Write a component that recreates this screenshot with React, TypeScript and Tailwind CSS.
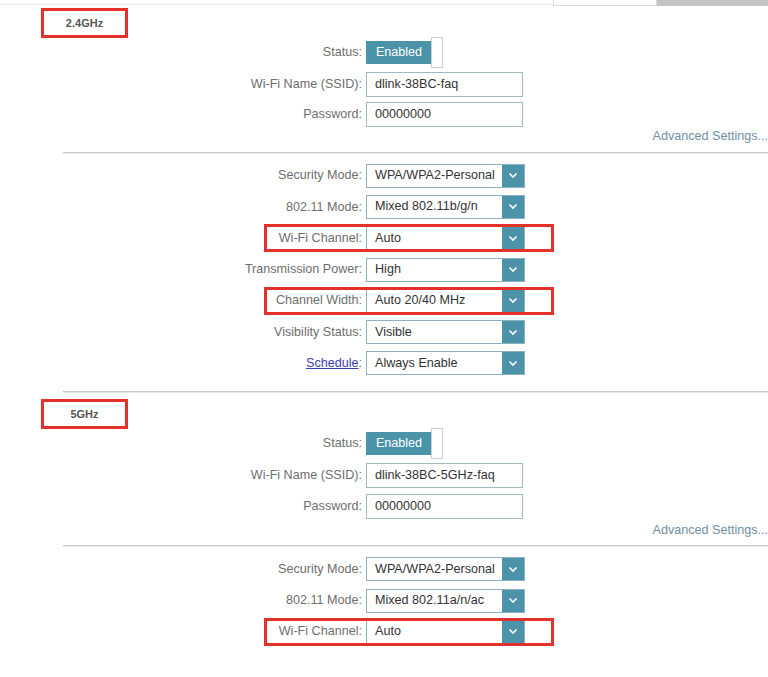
import React from 'react';

const teal = 'bg-[#4a93a8]';

const Chevron = () => (
  <svg width="10" height="7" viewBox="0 0 10 7" fill="none">
    <path d="M1.5 1.5 L5 5 L8.5 1.5" stroke="white" strokeWidth="1.6" />
  </svg>
);

const Label = ({ children }: { children: React.ReactNode }) => (
  <div className="w-[364px] shrink-0 text-right pr-[2px] text-[12.6px] text-[#6e6e6e] whitespace-nowrap">{children}</div>
);

const Field = ({ label, value }: { label: string; value: string }) => (
  <div className="flex items-center h-[25px]">
    <Label>{label}:</Label>
    <div className="ml-[2px] w-[157px] h-[25px] border border-[#a3b9c1] bg-white flex items-center px-[8px] text-[12.6px] text-[#333]">
      {value}
    </div>
  </div>
);

const Select = ({
  label,
  value,
  link,
  marked,
}: {
  label: string;
  value: string;
  link?: boolean;
  marked?: boolean;
}) => (
  <div className="relative flex items-center h-[31.3px]">
    {marked && (
      <div className="absolute left-[264px] top-[1.5px] w-[290px] h-[28px] border-[3px] border-[#e3312b]" />
    )}
    <Label>
      {link ? (
        <>
          <span className="underline text-[#3b3fb5]">{label}</span>:
        </>
      ) : (
        `${label}:`
      )}
    </Label>
    <div className="ml-[2px] w-[159px] h-[24px] border border-[#8fb0bc] bg-white flex">
      <div className="flex-1 flex items-center pl-[8px] text-[12.6px] text-[#333] whitespace-nowrap overflow-hidden">
        {value}
      </div>
      <div className={`w-[22px] shrink-0 ${teal} flex items-center justify-center`}>
        <Chevron />
      </div>
    </div>
  </div>
);

const Band = ({ name }: { name: string }) => (
  <div className="ml-[41px] w-[87px] h-[30px] border-[3px] border-[#e3312b] flex items-center justify-center text-[11px] font-bold text-[#555]">
    {name}
  </div>
);

const Status = () => (
  <div className="flex items-center h-[28px]">
    <Label>Status:</Label>
    <div className={`ml-[2px] w-[66px] h-[23px] ${teal} flex items-center justify-center text-[12.6px] text-white`}>
      Enabled
    </div>
    <div className="w-[12px] h-[31px] -ml-[1px] border border-[#c3d0d5] bg-white" />
  </div>
);

const Divider = () => <div className="ml-[63px] h-[2px] bg-[#c9c9c9] border-b border-[#e8e8e8]" />;

const Advanced = () => (
  <div className="flex justify-end h-[16px] items-center text-[12.6px] text-[#6f8fa1] whitespace-nowrap">
    Advanced Settings...
  </div>
);

type Opt = { label: string; value: string; link?: boolean; marked?: boolean };

const Section = ({
  name,
  ssid,
  options,
  loose,
}: {
  name: string;
  ssid: string;
  options: Opt[];
  loose?: boolean;
}) => (
  <div className="flex flex-col">
    <Band name={name} />
    <Status />
    <div className="mt-[6px]">
      <Field label="Wi-Fi Name (SSID)" value={ssid} />
    </div>
    <div className={loose ? 'mt-[6px]' : 'mt-[4.5px]'}>
      <Field label="Password" value="00000000" />
    </div>
    <div className={loose ? 'mt-[3px]' : 'mt-[2px]'}>
      <Advanced />
    </div>
    <div className="mt-[7px]">
      <Divider />
    </div>
    <div className="mt-[6.5px] flex flex-col">
      {options.map((o) => (
        <Select key={o.label} {...o} />
      ))}
    </div>
  </div>
);

export default function App() {
  return (
    <div className="w-[768px] h-[677px] overflow-hidden bg-white font-['Liberation_Sans',Arial,sans-serif]">
      <div className="flex h-[7px]">
        <div className="w-[553px] h-[5px] border-b border-[#e4e4e4]" />
        <div className="w-[104px] h-[6px] border-x border-b border-[#dcdcdc] bg-white" />
        <div className="flex-1 h-[6px] bg-[#c4c4c4]" />
      </div>
      <div className="mt-[1px]">
        <Section
          name="2.4GHz"
          ssid="dlink-38BC-faq"
          options={[
            { label: 'Security Mode', value: 'WPA/WPA2-Personal' },
            { label: '802.11 Mode', value: 'Mixed 802.11b/g/n' },
            { label: 'Wi-Fi Channel', value: 'Auto', marked: true },
            { label: 'Transmission Power', value: 'High' },
            { label: 'Channel Width', value: 'Auto 20/40 MHz', marked: true },
            { label: 'Visibility Status', value: 'Visible' },
            { label: 'Schedule', value: 'Always Enable', link: true },
          ]}
        />
      </div>
      <div className="mt-[12px]">
        <Divider />
      </div>
      <div className="mt-[6px]">
        <Section
          name="5GHz"
          ssid="dlink-38BC-5GHz-faq"
          loose
          options={[
            { label: 'Security Mode', value: 'WPA/WPA2-Personal' },
            { label: '802.11 Mode', value: 'Mixed 802.11a/n/ac' },
            { label: 'Wi-Fi Channel', value: 'Auto', marked: true },
          ]}
        />
      </div>
    </div>
  );
}
